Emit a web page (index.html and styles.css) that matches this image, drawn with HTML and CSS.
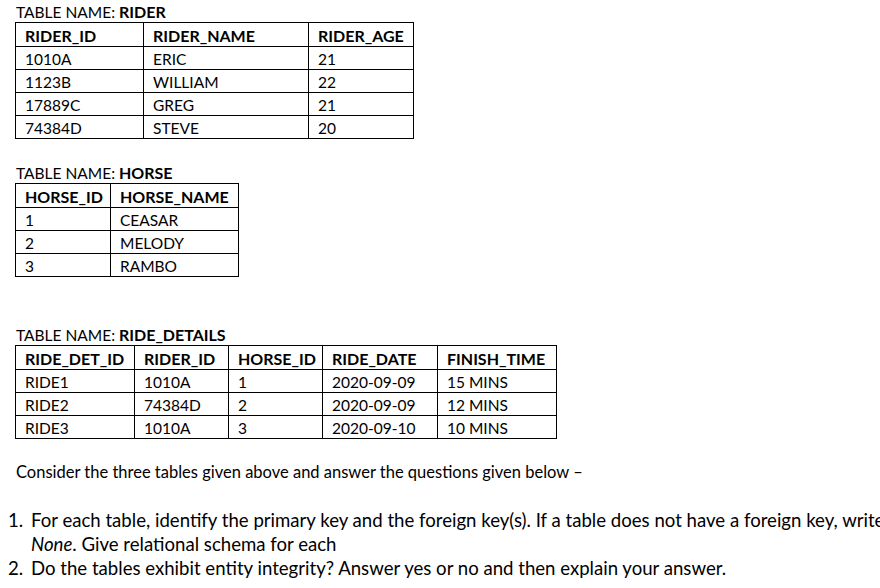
FILE: index.html
```html
<!DOCTYPE html>
<html>
<head>
<meta charset="utf-8">
<link rel="stylesheet" href="styles.css">
</head>
<body>
<div class="page">
  <section class="block block-rider">
    <div class="tname">TABLE NAME: <b>RIDER</b></div>
    <table class="grid">
      <colgroup><col style="width:128px"><col style="width:165px"><col style="width:105px"></colgroup>
      <tr class="head"><th>RIDER_ID</th><th>RIDER_NAME</th><th>RIDER_AGE</th></tr>
      <tr><td>1010A</td><td>ERIC</td><td>21</td></tr>
      <tr><td>1123B</td><td>WILLIAM</td><td>22</td></tr>
      <tr><td>17889C</td><td>GREG</td><td>21</td></tr>
      <tr><td>74384D</td><td>STEVE</td><td>20</td></tr>
    </table>
  </section>

  <section class="block block-horse">
    <div class="tname">TABLE NAME: <b>HORSE</b></div>
    <table class="grid">
      <colgroup><col style="width:95px"><col style="width:128px"></colgroup>
      <tr class="head"><th>HORSE_ID</th><th>HORSE_NAME</th></tr>
      <tr><td>1</td><td>CEASAR</td></tr>
      <tr><td>2</td><td>MELODY</td></tr>
      <tr><td>3</td><td>RAMBO</td></tr>
    </table>
  </section>

  <section class="block block-ride">
    <div class="tname">TABLE NAME: <b>RIDE_DETAILS</b></div>
    <table class="grid">
      <colgroup><col style="width:119px"><col style="width:94px"><col style="width:94px"><col style="width:115px"><col style="width:119px"></colgroup>
      <tr class="head"><th>RIDE_DET_ID</th><th>RIDER_ID</th><th>HORSE_ID</th><th>RIDE_DATE</th><th>FINISH_TIME</th></tr>
      <tr><td>RIDE1</td><td>1010A</td><td>1</td><td>2020-09-09</td><td>15 MINS</td></tr>
      <tr><td>RIDE2</td><td>74384D</td><td>2</td><td>2020-09-09</td><td>12 MINS</td></tr>
      <tr><td>RIDE3</td><td>1010A</td><td>3</td><td>2020-09-10</td><td>10 MINS</td></tr>
    </table>
  </section>

  <p class="intro">Consider the three tables given above and answer the questions given below –</p>

  <ol class="questions">
    <li class="q"><span class="num">1.</span><span class="qtext">For each table, identify the primary key and the foreign key(s). If a table does not have a foreign key, write<br><i>None</i>. Give relational schema for each</span></li>
    <li class="q"><span class="num">2.</span><span class="qtext">Do the tables exhibit entity integrity? Answer yes or no and then explain your answer.</span></li>
  </ol>
</div>
</body>
</html>
```

FILE: styles.css
```css
html, body {
  margin: 0;
  padding: 0;
  background: #ffffff;
}
body {
  width: 880px;
  height: 588px;
  overflow: hidden;
  font-family: "Lato", "Open Sans", sans-serif;
  color: #000;
}
.page {
  padding: 2px 0 0 15px;
}
.tname {
  font-size: 15.5px;
  line-height: 19px;
  margin-left: 1px;
  height: 20px;
}
.tname b {
  font-weight: 700;
  font-size: 16px;
}
.grid {
  border-collapse: collapse;
  table-layout: fixed;
  font-size: 15.5px;
}
.grid th, .grid td {
  border: 1px solid #000;
  padding: 0 0 0 9px;
  height: 22px;
  line-height: 20px;
  text-align: left;
  vertical-align: bottom;
  white-space: nowrap;
}
.grid th {
  font-weight: 700;
  font-size: 16px;
  height: 23px;
}
.block-horse {
  margin-top: 24px;
}
.block-ride {
  margin-top: 48px;
}
.intro {
  margin: 22px 0 0 1px;
  font-size: 16.5px;
  line-height: 22px;
}
.questions {
  list-style: none;
  margin: 25px 0 0 -7px;
  padding: 0;
  font-size: 18.6px;
  line-height: 24px;
  white-space: nowrap;
}
.q {
  display: flex;
}
.num {
  flex: 0 0 23px;
}
```
